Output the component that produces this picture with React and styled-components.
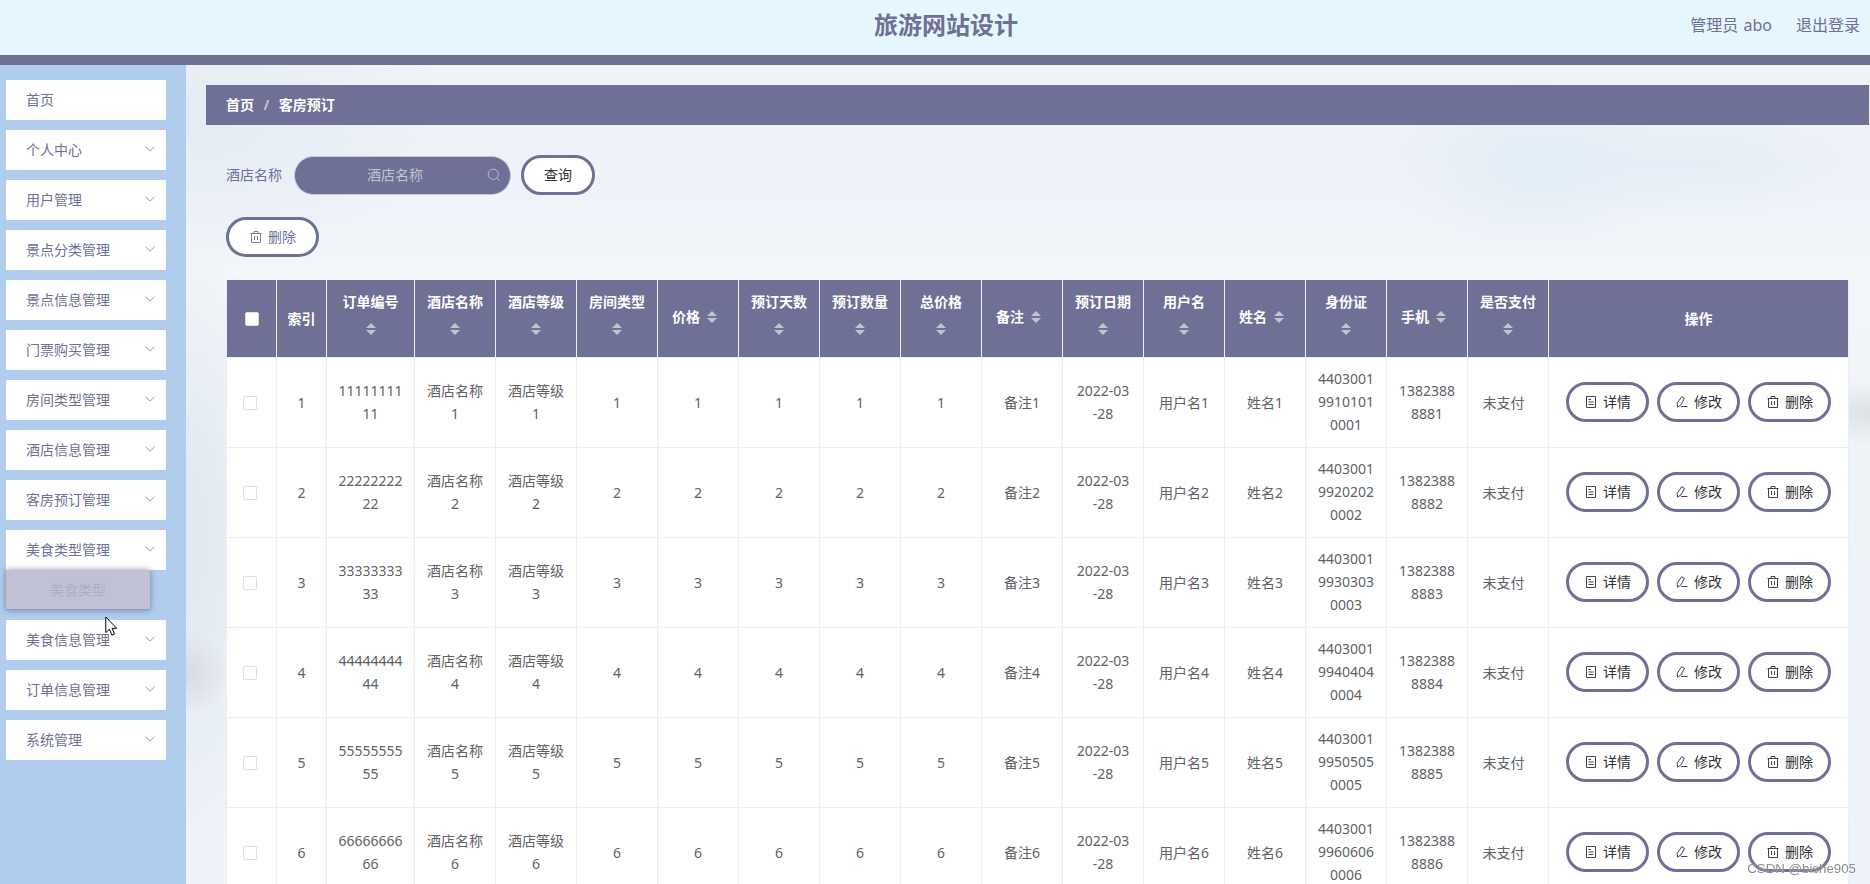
import React from 'react';
import styled, { createGlobalStyle, css } from 'styled-components';

const GlobalStyle = createGlobalStyle`
  * {
    box-sizing: border-box;
  }
  body {
    margin: 0;
    overflow: hidden;
    color: #606266;
    font-family: 'Noto Sans', 'Noto Sans CJK SC', sans-serif;
    font-size: 14px;
  }
`;

const PageStyled = styled.div`
  display: flex;
  flex-direction: column;
  width: 1870px;
  height: 884px;
  overflow: hidden;
`;
const HeaderStyled = styled.header`
  display: grid;
  grid-template-columns: 1fr auto 1fr;
  align-items: center;
  flex: none;
  height: 65px;
  padding: 0 10px 5px 32px;
  background: #e6f6ff;
  border-bottom: 10px solid #6e7096;
  color: #6e7096;
`;
const TitleStyled = styled.h1`
  grid-column: 2;
  margin: 0;
  font-size: 24px;
  line-height: 44px;
`;
const HeaderLinksStyled = styled.div`
  display: flex;
  justify-content: flex-end;
  gap: 24px;
  font-size: 16px;
  line-height: 44px;
  word-spacing: 1px;
`;
const BodyStyled = styled.div`
  display: flex;
  flex: 1;
  min-height: 0;
`;

const SidebarStyled = styled.nav`
  display: flex;
  flex-direction: column;
  flex: none;
  gap: 10px;
  width: 186px;
  padding: 15px 20px 0 6px;
  background: #b0cded;
`;
const MenuItemStyled = styled.div`
  display: flex;
  align-items: center;
  justify-content: space-between;
  height: 40px;
  padding: 0 9px 2px 20px;
  background: #fff;
  color: #6e7096;
  svg {
    color: #909399;
  }
`;
const SubMenuStyled = styled.div`
  width: 144px;
  height: 40px;
  background: #c0c1d4;
  border-bottom: 1px solid #9896c6;
  box-shadow: 0 0 6px rgba(60, 60, 80, 0.55);
  color: #acaec6;
  line-height: 40px;
  text-align: center;
`;

const MainStyled = styled.main`
  flex: 1;
  min-width: 0;
  padding: 20px 1px 0 20px;
  background: radial-gradient(
      ellipse 150px 85px at 1350px 100px,
      rgba(224, 236, 245, 0.8) 10%,
      rgba(224, 236, 245, 0) 100%
    ),
    radial-gradient(
      ellipse 170px 55px at 1510px 100px,
      rgba(226, 236, 245, 0.7) 10%,
      rgba(226, 236, 245, 0) 100%
    ),
    radial-gradient(
      ellipse 45px 42px at 0 608px,
      rgba(212, 216, 219, 0.8) 5%,
      rgba(212, 216, 219, 0) 100%
    ),
    radial-gradient(
      ellipse 70px 32px at 1684px 348px,
      rgba(219, 224, 229, 0.85) 10%,
      rgba(219, 224, 229, 0) 100%
    ),
    radial-gradient(
      ellipse 260px 150px at 0 50px,
      rgba(228, 236, 243, 0.9) 10%,
      rgba(228, 236, 243, 0) 100%
    ),
    radial-gradient(
      ellipse 90px 300px at 0 470px,
      rgba(224, 233, 241, 0.9) 20%,
      rgba(224, 233, 241, 0) 100%
    ),
    linear-gradient(#f0f4f8 0, #eef2f9 80px, #f3f6fa 220px, #eef3f8 440px, #eef2f9 780px);
`;
const BreadcrumbStyled = styled.div`
  display: flex;
  align-items: center;
  gap: 9.5px;
  height: 40px;
  padding: 0 0 2px 20px;
  background: #6e7096;
  color: #fff;
  font-weight: bold;
  span {
    color: #c0c4cc;
  }
`;
const ContentStyled = styled.div`
  padding: 30px 20px 0;
`;
const SearchFormStyled = styled.div`
  display: flex;
  align-items: center;
  height: 40px;
  color: #6e7096;
`;
const SearchLabelStyled = styled.label`
  padding-bottom: 2px;
`;
const SearchInputStyled = styled.div`
  display: flex;
  align-items: center;
  width: 217px;
  height: 39px;
  margin: 0 10px 0 12px;
  padding: 0 9px 1px 15px;
  border: 1px solid #c4c8da;
  border-radius: 20px;
  background: #6e7096;
  color: #c0c4cc;
  span {
    flex: 1;
    padding: 0 7px 1px 0;
    text-align: center;
  }
`;
const ButtonStyled = styled.button`
  display: inline-flex;
  align-items: center;
  gap: 5px;
  height: 40px;
  padding: 0 ${props => (props.$small ? '15px' : '20px')};
  border: 3px solid #6e7096;
  border-radius: 20px;
  background: #fff;
  color: ${props => (props.$muted ? '#6e7096' : '#303133')};
  font: inherit;
  line-height: 20px;
  white-space: nowrap;
`;
const ToolbarStyled = styled.div`
  display: flex;
  margin: 22px 0 23px;
`;

const TableStyled = styled.table`
  width: 1623px;
  border-left: 1px solid #ebeef5;
  border-collapse: separate;
  border-spacing: 0;
  table-layout: fixed;
  background: #fff;
  line-height: 23px;
  text-align: center;
`;
const cellBorder = css`
  padding: 0;
  border-right: 1px solid #ebeef5;
  border-bottom: 1px solid #ebeef5;
`;
const ThStyled = styled.th`
  ${cellBorder}
  height: 78px;
  background: #6e7096;
  color: #fff;
`;
const TdStyled = styled.td`
  ${cellBorder}
  height: 90px;
  ${props => props.$multiline && 'padding-bottom: 2px;'}
  ${props => props.$status && 'padding-right: 9px;'}
`;
const LineStyled = styled.div`
  white-space: nowrap;
`;
const SortLabelStyled = styled.div`
  display: flex;
  flex-direction: ${props => (props.$stacked ? 'column' : 'row')};
  align-items: center;
  justify-content: center;
  padding-bottom: ${props => (props.$stacked ? '2px' : '4px')};
`;
const SortCaretStyled = styled.span`
  display: flex;
  flex-direction: column;
  align-items: center;
  justify-content: center;
  gap: 2px;
  width: 24px;
  height: 32px;
  &::before,
  &::after {
    content: '';
    border: 5px solid transparent;
  }
  &::before {
    border-top: 0;
    border-bottom-color: #c0c4cc;
  }
  &::after {
    border-bottom: 0;
    border-top-color: #c0c4cc;
  }
`;
const CheckboxStyled = styled.span`
  display: block;
  width: 14px;
  height: 14px;
  margin: 0 auto;
  border: 1px solid #dcdfe6;
  border-radius: 2px;
  background: #fff;
  ${props => !props.$head && 'transform: translateX(-2px);'}
`;
const ActionsStyled = styled.div`
  display: flex;
  justify-content: center;
  gap: 8px;
  padding-bottom: 1px;
`;

const WatermarkStyled = styled.div`
  position: fixed;
  right: 14px;
  bottom: 5px;
  color: rgba(110, 110, 110, 0.8);
  font-family: 'Liberation Sans', sans-serif;
  font-size: 13.3px;
  line-height: 20px;
  text-shadow: 0 0 1px #fff;
`;
const CursorStyled = styled.svg`
  position: fixed;
  left: 105px;
  top: 616px;
`;

const iconPaths = {
  delete: 'M1.5 3.5h11M5 3.5V1.5h4v2M2.5 3.5v9h9v-9M5.5 6v4M8.5 6v4',
  detail: 'M2.5 1.5h9v11h-9zM4.5 4.5h2.5M4.5 7h5M4.5 9.5h5',
  edit: 'M6.6 1.7l2.8 1.5-3.3 6.6-3.6 2.4-.2-4zM6.2 11.5h6.3',
  search: 'M6.3 1.2a5 5 0 1 1 0 10.2a5 5 0 1 1 0-10.2M10 10.2l2.8 2.8',
  arrow: 'M2.5 4.6L7 9.2l4.5-4.6',
};

const Icon = ({ name }) => (
  <svg
    width="14"
    height="14"
    viewBox="0 0 14 14"
    fill="none"
    stroke="currentColor"
    strokeWidth="0.9"
  >
    <path d={iconPaths[name]} />
  </svg>
);

const menus = [
  { label: '首页', leaf: true },
  { label: '个人中心' },
  { label: '用户管理' },
  { label: '景点分类管理' },
  { label: '景点信息管理' },
  { label: '门票购买管理' },
  { label: '房间类型管理' },
  { label: '酒店信息管理' },
  { label: '客房预订管理' },
  { label: '美食类型管理', child: '美食类型' },
  { label: '美食信息管理' },
  { label: '订单信息管理' },
  { label: '系统管理' },
];

const columns = [
  '订单编号',
  '酒店名称',
  '酒店等级',
  '房间类型',
  '价格',
  '预订天数',
  '预订数量',
  '总价格',
  '备注',
  '预订日期',
  '用户名',
  '姓名',
  '身份证',
  '手机',
  '是否支付',
];

const idCards = ['9910101', '9920202', '9930303', '9940404', '9950505', '9960606'];

// every cell is a list of its lines
const rows = idCards.map((idCard, index) => {
  const n = `${index + 1}`;
  return [
    [n],
    [n.repeat(8), n.repeat(2)],
    ['酒店名称', n],
    ['酒店等级', n],
    [n],
    [n],
    [n],
    [n],
    [n],
    [`备注${n}`],
    ['2022-03', '-28'],
    [`用户名${n}`],
    [`姓名${n}`],
    ['4403001', idCard, `000${n}`],
    ['1382388', `888${n}`],
    ['未支付'],
  ];
});

const Sidebar = () => (
  <SidebarStyled>
    {menus.map(({ label, leaf, child }) => (
      <div key={label}>
        <MenuItemStyled>
          {label}
          {!leaf && <Icon name="arrow" />}
        </MenuItemStyled>
        {child && <SubMenuStyled>{child}</SubMenuStyled>}
      </div>
    ))}
  </SidebarStyled>
);

const OrderTable = () => (
  <TableStyled>
    <colgroup>
      <col width="50" />
      <col width="50" />
      <col width="88" />
      {columns.slice(1).map(label => (
        <col key={label} width="81" />
      ))}
      <col width="300" />
    </colgroup>
    <thead>
      <tr>
        <ThStyled>
          <CheckboxStyled $head />
        </ThStyled>
        <ThStyled>索引</ThStyled>
        {columns.map(label => (
          <ThStyled key={label}>
            <SortLabelStyled $stacked={label.length > 2}>
              {label}
              <SortCaretStyled />
            </SortLabelStyled>
          </ThStyled>
        ))}
        <ThStyled>操作</ThStyled>
      </tr>
    </thead>
    <tbody>
      {rows.map((cells, rowIndex) => (
        <tr key={`row${rowIndex}`}>
          <TdStyled>
            <CheckboxStyled />
          </TdStyled>
          {cells.map((lines, index) => (
            <TdStyled
              key={`cell${index}`}
              $multiline={lines.length > 1}
              $status={index === cells.length - 1}
            >
              {lines.map(line => (
                <LineStyled key={line}>{line}</LineStyled>
              ))}
            </TdStyled>
          ))}
          <TdStyled>
            <ActionsStyled>
              <ButtonStyled $small>
                <Icon name="detail" />
                详情
              </ButtonStyled>
              <ButtonStyled $small>
                <Icon name="edit" />
                修改
              </ButtonStyled>
              <ButtonStyled $small>
                <Icon name="delete" />
                删除
              </ButtonStyled>
            </ActionsStyled>
          </TdStyled>
        </tr>
      ))}
    </tbody>
  </TableStyled>
);

const App = () => (
  <>
    <GlobalStyle />
    <PageStyled>
      <HeaderStyled>
        <TitleStyled>旅游网站设计</TitleStyled>
        <HeaderLinksStyled>
          <div>管理员 abo</div>
          <div>退出登录</div>
        </HeaderLinksStyled>
      </HeaderStyled>
      <BodyStyled>
        <Sidebar />
        <MainStyled>
          <BreadcrumbStyled>
            首页<span>/</span>客房预订
          </BreadcrumbStyled>
          <ContentStyled>
            <SearchFormStyled>
              <SearchLabelStyled>酒店名称</SearchLabelStyled>
              <SearchInputStyled>
                <span>酒店名称</span>
                <Icon name="search" />
              </SearchInputStyled>
              <ButtonStyled>查询</ButtonStyled>
            </SearchFormStyled>
            <ToolbarStyled>
              <ButtonStyled $muted>
                <Icon name="delete" />
                删除
              </ButtonStyled>
            </ToolbarStyled>
            <OrderTable />
          </ContentStyled>
        </MainStyled>
      </BodyStyled>
    </PageStyled>
    <CursorStyled width="14" height="22" viewBox="0 0 14 22">
      <path
        d="M.8 1v15.6l3.6-3.4 2.5 5.9 2.6-1.1-2.4-5.7h4.6z"
        fill="#fff"
        stroke="#000"
      />
    </CursorStyled>
    <WatermarkStyled>CSDN @bishe905</WatermarkStyled>
  </>
);

export default App;
